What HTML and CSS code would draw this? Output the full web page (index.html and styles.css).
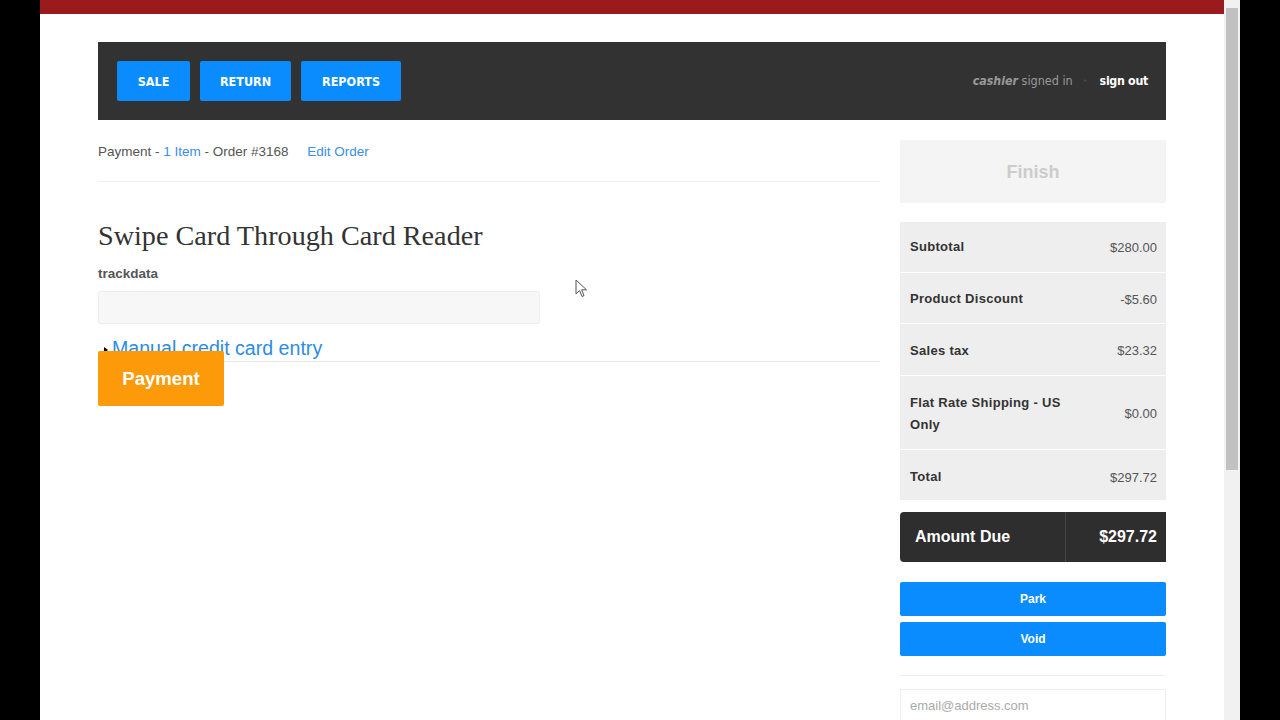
FILE: index.html
```html
<!DOCTYPE html>
<html>
<head>
<meta charset="utf-8">
<link rel="stylesheet" href="styles.css">
</head>
<body>
<div class="frame">
  <div class="page">
    <div class="topbar"></div>
    <div class="wrap">
      <div class="nav">
        <div class="nav-buttons">
          <a class="nav-btn">SALE</a>
          <a class="nav-btn">RETURN</a>
          <a class="nav-btn">REPORTS</a>
        </div>
        <div class="nav-user">
          <span class="who">cashier</span> signed in <span class="sep">•</span> <span class="signout">sign out</span>
        </div>
      </div>
      <div class="columns">
        <div class="left">
          <div class="crumb">Payment - <a class="link">1 Item</a> - Order #3168 <a class="link edit">Edit Order</a></div>
          <h1 class="title">Swipe Card Through Card Reader</h1>
          <div class="label">trackdata</div>
          <div class="input"></div>
          <div class="manual"><span class="marker"></span><span class="manual-text">Manual credit card entry</span></div>
          <div class="pay-btn">Payment</div>
        </div>
        <div class="right">
          <div class="finish">Finish</div>
          <div class="totals">
            <div class="row"><span class="k">Subtotal</span><span class="v">$280.00</span></div>
            <div class="row"><span class="k">Product Discount</span><span class="v">-$5.60</span></div>
            <div class="row"><span class="k">Sales tax</span><span class="v">$23.32</span></div>
            <div class="row tall"><span class="k">Flat Rate Shipping - US Only</span><span class="v">$0.00</span></div>
            <div class="row"><span class="k">Total</span><span class="v">$297.72</span></div>
          </div>
          <div class="due"><span class="due-k">Amount Due</span><span class="due-v">$297.72</span></div>
          <div class="blue-btn">Park</div>
          <div class="blue-btn void">Void</div>
          <div class="hr"></div>
          <div class="email">email@address.com</div>
        </div>
      </div>
    </div>
    <svg class="cursor" width="14" height="20" viewBox="0 0 14 20"><path d="M1 1 L1 15 L4.5 11.5 L7 17.5 L9 16.6 L6.6 10.8 L11.5 10.8 Z" fill="#fff" stroke="#555" stroke-width="1"/></svg>
  </div>
  <div class="scrollbar"><div class="thumb"></div></div>
</div>
</body>
</html>
```
FILE: styles.css
```css
html, body { margin: 0; padding: 0; }
body { background: #000; font-family: "Liberation Sans", Arial, sans-serif; overflow: hidden; }
.frame { margin: 0 40px; width: 1200px; height: 720px; display: flex; background: #fff; overflow: hidden; }
.page { width: 1184px; position: relative; }
.topbar { height: 14px; background: #9b1a1c; }
.wrap { padding-left: 58px; width: 1068px; }
.nav { margin-top: 28px; height: 78px; background: #323232; display: flex; align-items: center; justify-content: space-between; padding: 0 18px 0 19px; box-sizing: border-box; }
.nav-buttons { display: flex; gap: 10px; }
.nav-btn { display: flex; align-items: center; justify-content: center; height: 40px; background: #0a8cff; color: #fff; font-family: "DejaVu Sans Condensed", "DejaVu Sans", sans-serif; font-weight: bold; font-size: 12.5px; border-radius: 2px; }
.nav-btn:nth-child(1) { width: 73px; }
.nav-btn:nth-child(2) { width: 91px; }
.nav-btn:nth-child(3) { width: 100px; }
.nav-user { color: #999; font-size: 12.5px; font-family: "DejaVu Sans Condensed", "Liberation Sans", sans-serif; margin-top: -2px; }
.who { font-style: italic; font-weight: bold; font-size: 12.3px; }
.sep { color: #555; font-size: 7px; margin: 0 9px 0 7px; vertical-align: 2px; }
.signout { color: #fff; font-weight: 600; font-size: 12.3px; letter-spacing: -0.3px; }
.columns { display: flex; gap: 20px; }
.left { width: 782px; }
.right { width: 266px; margin-top: 20px; }
.crumb { margin-top: 23px; line-height: 18px; padding-bottom: 20px; border-bottom: 1px solid #eee; font-size: 13.5px; color: #555; }
.link { color: #3a8ee6; }
.edit { margin-left: 15px; }
.title { margin: 38px 0 0; font-family: "Liberation Serif", "Times New Roman", serif; font-weight: normal; font-size: 28.2px; line-height: 32px; color: #333; }
.label { margin-top: 14px; line-height: 16px; font-size: 13.5px; font-weight: bold; color: #555; }
.input { margin-top: 9px; width: 442px; height: 33px; box-sizing: border-box; background: #f7f7f7; border: 1px solid #eee; border-radius: 2px; }
.manual { margin-top: 13px; height: 24px; border-bottom: 1px solid #e6e6e6; display: flex; align-items: center; position: relative; z-index: 0; }
.marker { width: 0; height: 0; border-left: 4px solid #000; border-top: 3px solid transparent; border-bottom: 3px solid transparent; margin: 2px 4px 0 6px; }
.manual-text { font-size: 19.6px; line-height: 22px; color: #2d8be5; position: relative; z-index: 2; margin-top: -2px; }
.pay-btn { margin-top: -11px; width: 126px; height: 55px; background: #fd9a0a; color: #fff; font-weight: bold; font-size: 18.6px; display: flex; align-items: center; justify-content: center; border-radius: 2px; position: relative; z-index: 1; }
.finish { height: 63px; background: #f4f4f4; color: #ccc; font-weight: bold; font-size: 18px; display: flex; align-items: center; justify-content: center; border-radius: 2px; padding-top: 1px; box-sizing: border-box; }
.totals { margin-top: 19px; }
.row { background: #eee; height: 50px; display: flex; align-items: center; justify-content: space-between; padding: 0 9px 0 10px; border-bottom: 1px solid #fff; font-size: 13px; }
.row:nth-child(3) { height: 51px; }
.row.tall { height: 73px; }
.row:last-child { border-bottom: 0; height: 50px; padding-top: 2px; box-sizing: border-box; }
.k { font-weight: bold; color: #333; letter-spacing: 0.3px; line-height: 22px; max-width: 160px; padding-top: 2px; }
.v { color: #555; padding-top: 2px; }
.row:first-child .k, .row:first-child .v { padding-top: 0; }
.due { margin-top: 12px; height: 50px; background: #2e2e2e; border-radius: 4px 0 0 4px; display: flex; color: #fff; font-weight: bold; font-size: 16px; }
.due-k { width: 166px; padding-left: 15px; box-sizing: border-box; display: flex; align-items: center; border-right: 1px solid #444; }
.due-v { flex: 1; display: flex; align-items: center; justify-content: flex-end; padding-right: 9px; }
.blue-btn { margin-top: 20px; height: 34px; background: #0a8cff; color: #fff; font-weight: bold; font-size: 12px; display: flex; align-items: center; justify-content: center; border-radius: 2px; }
.blue-btn.void { margin-top: 6px; }
.hr { margin-top: 19px; border-top: 1px solid #eee; }
.email { margin-top: 13px; height: 40px; border: 1px solid #eee; box-sizing: border-box; padding: 8px 9px; font-size: 13px; color: #aaa; }
.cursor { position: absolute; left: 535px; top: 279px; }
.scrollbar { width: 16px; height: 720px; background: #f1f1f1; position: relative; }
.thumb { position: absolute; left: 2px; top: 8px; width: 12px; height: 462px; background: #c1c1c1; }
```
